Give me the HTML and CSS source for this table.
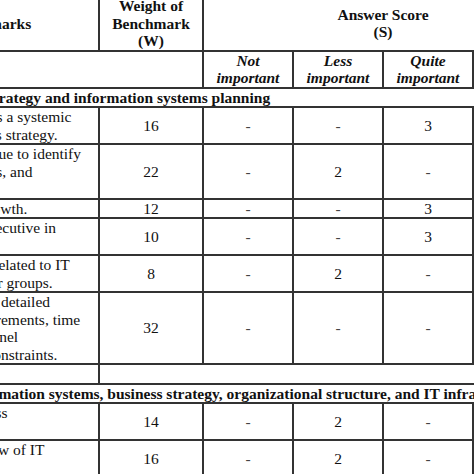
FILE: index.html
```html
<!DOCTYPE html>
<html>
<head>
<meta charset="utf-8">
<title>Benchmark weights</title>
<link rel="stylesheet" href="styles.css">
</head>
<body>
<div class="viewport">
<table class="bench">
<colgroup>
<col class="c-bench"><col class="c-weight"><col class="c-score"><col class="c-score"><col class="c-score"><col class="c-score">
</colgroup>
<thead>
<tr class="head-top">
<th class="h-bench">Benchmarks</th>
<th>Weight of<br>Benchmark<br>(W)</th>
<th colspan="4">Answer Score<br>(S)</th>
</tr>
<tr class="head-sub">
<th colspan="2"></th>
<th class="lvl">Not<br>important</th>
<th class="lvl">Less<br>important</th>
<th class="lvl">Quite<br>important</th>
<th class="lvl">Very<br>important</th>
</tr>
</thead>
<tbody>
<tr class="section"><td colspan="6">A. Business strategy and information systems planning</td></tr>
<tr><td class="desc">The ISP plan is a systemic<br>ties to business strategy.</td><td>16</td><td class="nil">-</td><td class="nil">-</td><td>3</td><td class="nil">-</td></tr>
<tr><td class="desc">Uses a technique to identify<br>it opportunities, and<br>market threats.</td><td>22</td><td class="nil">-</td><td>2</td><td class="nil">-</td><td class="nil">-</td></tr>
<tr><td class="desc">Plan for IT growth.</td><td>12</td><td class="nil">-</td><td class="nil">-</td><td>3</td><td class="nil">-</td></tr>
<tr><td class="desc">Role of the executive in<br>IT planning.</td><td>10</td><td class="nil">-</td><td class="nil">-</td><td>3</td><td class="nil">-</td></tr>
<tr><td class="desc">All decisions related to IT<br>made with user groups.</td><td>8</td><td class="nil">-</td><td>2</td><td class="nil">-</td><td class="nil">-</td></tr>
<tr><td class="desc">Plan describes detailed<br>budgets, requirements, time<br>frames, personnel<br>and funding constraints.</td><td>32</td><td class="nil">-</td><td class="nil">-</td><td class="nil">-</td><td class="nil">-</td></tr>
<tr class="blank"><td>&nbsp;</td><td colspan="5">&nbsp;</td></tr>
<tr class="section"><td colspan="6">B. Fit of information systems, business strategy, organizational structure, and IT infrastructure</td></tr>
<tr><td class="desc">IT aids business<br>processes.</td><td>14</td><td class="nil">-</td><td>2</td><td class="nil">-</td><td class="nil">-</td></tr>
<tr><td class="desc">Frequent review of IT<br>infrastructure.</td><td>16</td><td class="nil">-</td><td>2</td><td class="nil">-</td><td class="nil">-</td></tr>
</tbody>
</table>
</div>
</body>
</html>
```

FILE: styles.css
```css
html, body {
  margin: 0;
  padding: 0;
  background: #fff;
}

body {
  width: 474px;
  height: 474px;
  overflow: hidden;
}

.viewport {
  width: 474px;
  height: 474px;
  overflow: hidden;
}

.bench {
  border-collapse: collapse;
  table-layout: fixed;
  width: 657px;
  margin: -5px 0 0 -94px;
  font-family: "Liberation Serif", "Times New Roman", serif;
  font-size: 15.5px;
  line-height: 17.5px;
  color: #111;
}

.c-bench { width: 192px; }
.c-weight { width: 104px; }
.c-score { width: 90px; }

.bench th,
.bench td {
  border: 2px solid #333;
  padding: 0 3px;
  text-align: center;
  vertical-align: middle;
  white-space: nowrap;
}

.bench th {
  font-weight: bold;
}

.bench th.h-bench {
  padding-right: 30px;
}

.lvl {
  font-style: italic;
}

.bench td.desc {
  text-align: left;
  padding-left: 0;
}

.nil {
  color: #444;
}

.bench .section td {
  text-align: left;
  font-weight: bold;
  padding-left: 0;
}
```
